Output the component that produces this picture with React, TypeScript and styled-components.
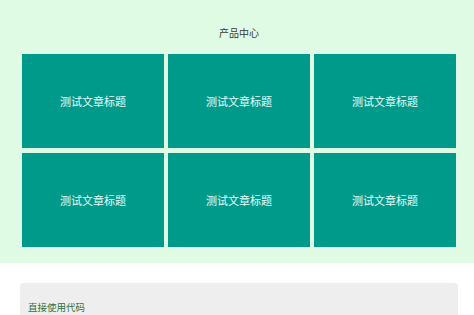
import React from 'react';
import styled, { createGlobalStyle } from 'styled-components';

const GlobalStyle = createGlobalStyle`
  body {
    margin: 0;
    background: #fff;
    font-family: "Microsoft YaHei", "Noto Sans CJK SC", sans-serif;
  }
`;

const ProductSection = styled.section`
  padding: 26px 18px 16px 22px;
  background: #e0fbe4;
`;

const SectionTitle = styled.h2`
  margin: 0 0 14px;
  font-size: 10px;
  font-weight: 400;
  line-height: 14px;
  text-align: center;
  color: #3a3a3a;
`;

const TileGrid = styled.div`
  display: grid;
  grid-template-columns: repeat(3, 1fr);
  grid-auto-rows: 94px;
  column-gap: 4px;
  row-gap: 5px;
`;

const Tile = styled.div`
  display: flex;
  align-items: center;
  justify-content: center;
  background: #009a8b;
  font-size: 11px;
  color: #eafaf6;
`;

const CodeBox = styled.div`
  margin: 20px 16px 0 20px;
  padding: 18px 8px 8px;
  background: #eeeeee;
  border-radius: 3px;
`;

const CodeTitle = styled.p`
  margin: 0;
  font-size: 9.5px;
  line-height: 12px;
  color: #2c6e3c;
`;

const tiles = Array.from({ length: 6 }, () => '测试文章标题');

const App: React.FC = () => {
  return (
    <>
      <GlobalStyle />
      <ProductSection>
        <SectionTitle>产品中心</SectionTitle>
        <TileGrid>
          {tiles.map((title, i) => (
            <Tile key={i}>{title}</Tile>
          ))}
        </TileGrid>
      </ProductSection>

      <CodeBox>
        <CodeTitle>直接使用代码</CodeTitle>
      </CodeBox>
    </>
  );
};

export default App;
